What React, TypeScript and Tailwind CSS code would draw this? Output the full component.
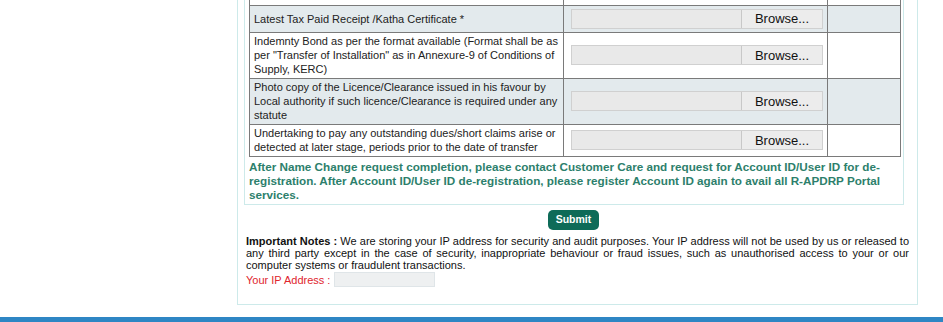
const rows = [
  {
    label: "Latest Tax Paid Receipt /Katha Certificate *",
    shaded: true,
  },
  {
    label:
      'Indemnty Bond as per the format available (Format shall be as per "Transfer of Installation" as in Annexure-9 of Conditions of Supply, KERC)',
    shaded: false,
  },
  {
    label:
      "Photo copy of the Licence/Clearance issued in his favour by Local authority if such licence/Clearance is required under any statute",
    shaded: true,
  },
  {
    label:
      "Undertaking to pay any outstanding dues/short claims arise or detected at later stage, periods prior to the date of transfer",
    shaded: false,
  },
];

function FileInput() {
  return (
    <div className="flex h-[20px] w-[252px] border border-[#d0d0d0] bg-[#e9e9e9]">
      <div className="flex-1" />
      <div className="flex w-[81px] items-center justify-center border-l border-[#c8c8c8] bg-[#ececec] text-[13px] leading-none text-[#111]">
        Browse...
      </div>
    </div>
  );
}

export default function App() {
  return (
    <div className="flex w-[943px] flex-col bg-white font-['Liberation_Sans',Arial,sans-serif] text-black">
      <div className="ml-[237px] w-[681px] border-x border-b border-[#cdeaea] px-[6px] pb-[16px]">
        <div className="w-[660px] border-x border-b border-[#cdeaea] px-[4px] pb-[2px]">
          <table className="w-[651px] table-fixed border-collapse">
            <colgroup>
              <col className="w-[314px]" />
              <col className="w-[264px]" />
              <col className="w-[73px]" />
            </colgroup>
            <tbody>
              <tr className="h-[5px]">
                <td className="border-x border-b border-[#7a7a7a]" />
                <td className="border-x border-b border-[#7a7a7a]" />
                <td className="border-x border-b border-[#7a7a7a]" />
              </tr>
              {rows.map((r, i) => (
                <tr key={i} className={r.shaded ? "bg-[#e3eaed]" : "bg-white"}>
                  <td className="border border-[#7a7a7a] px-[4px] py-[1.5px] align-middle text-[11px] leading-[14px] text-[#222]">
                    {r.label}
                  </td>
                  <td className="border border-[#7a7a7a] px-[7px] py-[3px] align-middle">
                    <FileInput />
                  </td>
                  <td className="border border-[#7a7a7a]" />
                </tr>
              ))}
            </tbody>
          </table>
          <p className="mt-[3px] text-[11.7px] font-bold leading-[14px] text-[#2d7f6c]">
            After Name Change request completion, please contact Customer Care and request for Account ID/User ID for de-registration. After Account ID/User ID de-registration, please register Account ID again to avail all R-APDRP Portal services.
          </p>
        </div>
        <div className="mt-[5px] flex justify-center pr-[8px]">
          <button className="h-[20px] rounded-[5px] bg-[#0e6b58] px-[8px] text-[10.5px] font-bold leading-none text-white">
            Submit
          </button>
        </div>
        <p className="mt-[5px] px-[2px] text-justify text-[11px] leading-[12px] text-[#111]">
          <span className="font-bold">Important Notes :</span> We are storing your IP address for security and audit purposes. Your IP address will not be used by us or released to any third party except in the case of security, inappropriate behaviour or fraud issues, such as unauthorised access to your or our computer systems or fraudulent transactions.
        </p>
        <div className="mt-[1px] flex items-center px-[2px] text-[11px]">
          <span className="text-[#e0252e]">Your IP Address :</span>
          <div className="ml-[4px] h-[15px] w-[101px] border border-[#dfe5e8] bg-[#eef0f1]" />
        </div>
      </div>
      <div className="mt-[12px] h-[6px] w-full bg-[#2e86c4]" />
    </div>
  );
}
